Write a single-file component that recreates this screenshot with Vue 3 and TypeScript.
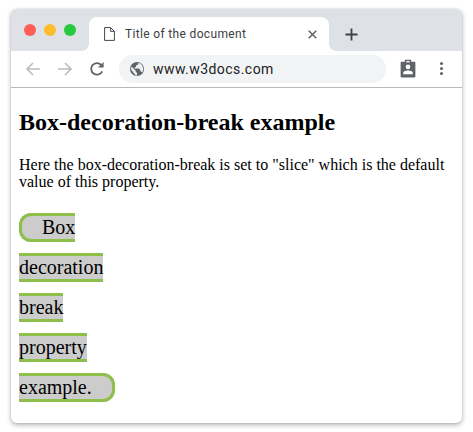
<script setup lang="ts">
const words: string[] = ['Box', 'decoration', 'break', 'property', 'example.']
</script>

<template>
  <div class="page">
    <div class="window">
      <div class="tabstrip">
        <div class="lights">
          <span class="light red"></span>
          <span class="light yellow"></span>
          <span class="light green"></span>
        </div>
        <div class="tab">
          <svg class="doc" width="11" height="14" viewBox="0 0 11 14" fill="none">
            <path d="M.6 .6H6.6L10.4 4.4V13.4H.6Z M6.6 .6V4.4H10.4" stroke="#45484c" stroke-width="1" />
          </svg>
          <span class="tab-title">Title of the document</span>
          <svg class="close" width="9" height="9" viewBox="0 0 9 9" fill="none">
            <path d="M.7 .7L8.3 8.3M8.3 .7L.7 8.3" stroke="#5f6368" stroke-width="1.5" />
          </svg>
        </div>
        <svg class="plus" width="13" height="13" viewBox="0 0 13 13" fill="none">
          <path d="M6.5 .5V12.5M.5 6.5H12.5" stroke="#3c4043" stroke-width="1.8" />
        </svg>
      </div>
      <div class="toolbar">
        <svg class="nav nav-back" width="16" height="14" viewBox="0 0 16 14" fill="none">
          <path d="M15 7H2M8 1L2 7L8 13" stroke="#b9bcc0" stroke-width="1.6" />
        </svg>
        <svg class="nav nav-forward" width="16" height="14" viewBox="0 0 16 14" fill="none">
          <path d="M1 7H14M8 1L14 7L8 13" stroke="#b9bcc0" stroke-width="1.6" />
        </svg>
        <svg class="nav reload" width="16" height="16" viewBox="0 0 16 16" fill="none">
          <path d="M13.2 10.4A5.8 5.8 0 1 1 12.2 3.9" stroke="#5f6368" stroke-width="1.8" />
          <path d="M14.6 .9V6.6H8.9Z" fill="#5f6368" />
        </svg>
        <div class="omnibox">
          <svg class="globe" width="14" height="14" viewBox="0 0 14 14">
            <circle cx="7" cy="7" r="7" fill="#5f6368" />
            <path d="M1.5 4.6L5.6 8.4V9.6L7 11V13.4L5.6 13.2L1 7.5Z M8 .9L8.2 2.4L6 3.5V5H4.8V6.4H8.8L10.4 8V9.4H11.2L12.5 10.4L13.3 7L12.3 3.5L10.4 1.6Z" fill="#eef0f2" />
          </svg>
          <span class="url">www.w3docs.com</span>
        </div>
        <svg class="clipboard" width="16" height="19" viewBox="0 0 15 18">
          <path d="M1.5 2.5H4.5V.8H10.5V2.5H13.5A1 1 0 0 1 14.5 3.5V16.5A1 1 0 0 1 13.5 17.5H1.5A1 1 0 0 1 .5 16.5V3.5A1 1 0 0 1 1.5 2.5Z" fill="#5f6368" />
          <rect x="6" y="1.8" width="3" height="1.5" fill="#f4f4f5" />
          <circle cx="7.5" cy="7.5" r="2.2" fill="#fff" />
          <path d="M3 14.5V13C3 11.4 5.5 10.8 7.5 10.8S12 11.4 12 13V14.5Z" fill="#fff" />
        </svg>
        <div class="dots">
          <span class="dot"></span>
          <span class="dot"></span>
          <span class="dot"></span>
        </div>
      </div>
      <main class="content">
        <h1 class="heading">Box-decoration-break example</h1>
        <p class="intro">Here the box-decoration-break is set to "slice" which is the default value of this property.</p>
        <div class="demo">
          <span class="slice"><template v-for="(word, i) in words" :key="word">{{ word }}<br v-if="i < words.length - 1" /></template></span>
        </div>
      </main>
    </div>
  </div>
</template>

<style>
html,
body {
  margin: 0;
  background: #fff;
}
</style>

<style scoped>
.page {
  width: 473px;
  height: 432px;
  padding: 9px 11px;
  box-sizing: border-box;
  background: #fff;
  overflow: hidden;
}
.window {
  width: 451px;
  height: 414px;
  display: flex;
  flex-direction: column;
  background: #fff;
  border-radius: 6px;
  overflow: hidden;
  box-shadow: 0 2px 5px rgba(0, 0, 0, 0.3), 0 0 2px rgba(0, 0, 0, 0.12);
}
.tabstrip {
  height: 42px;
  flex: none;
  display: flex;
  align-items: flex-end;
  background: #dee1e6;
}
.lights {
  display: flex;
  gap: 8px;
  align-self: flex-start;
  margin: 15px 0 0 13px;
}
.light {
  width: 12px;
  height: 12px;
  border-radius: 50%;
}
.red {
  background: #ff5f57;
}
.yellow {
  background: #febc2e;
}
.green {
  background: #28c840;
}
.tab {
  position: relative;
  width: 240px;
  height: 34px;
  margin-left: 13px;
  padding: 0 12px 0 15px;
  box-sizing: border-box;
  display: flex;
  align-items: center;
  background: #fff;
  border-radius: 8px 8px 0 0;
}
.tab::before,
.tab::after {
  content: "";
  position: absolute;
  bottom: 0;
  width: 7px;
  height: 7px;
}
.tab::before {
  left: -7px;
  background: radial-gradient(circle at 0 0, #dee1e6 6.5px, #fff 7px);
}
.tab::after {
  right: -7px;
  background: radial-gradient(circle at 100% 0, #dee1e6 6.5px, #fff 7px);
}
.doc {
  flex: none;
}
.tab-title {
  margin-left: 10px;
  flex: 1;
  font: 12px "Roboto", "Liberation Sans", sans-serif;
  letter-spacing: 0.34px;
  color: #3c4043;
  white-space: nowrap;
}
.close {
  flex: none;
}
.plus {
  align-self: flex-start;
  margin: 19px 0 0 16px;
}
.toolbar {
  height: 37px;
  flex: none;
  box-sizing: border-box;
  display: flex;
  align-items: center;
  background: #fff;
  border-bottom: 1px solid #b8b9ba;
  padding: 0 0 1px 14px;
}
.nav {
  flex: none;
}
.nav-forward {
  margin-left: 16px;
}
.reload {
  margin-left: 16px;
}
.omnibox {
  width: 267px;
  height: 28px;
  margin-left: 14px;
  padding-left: 11px;
  box-sizing: border-box;
  display: flex;
  align-items: center;
  background: #f1f3f4;
  border-radius: 14px;
}
.url {
  margin-left: 9px;
  font: 14px "Roboto", "Liberation Sans", sans-serif;
  letter-spacing: 0.45px;
  color: #202124;
}
.clipboard {
  flex: none;
  margin-left: 14px;
}
.dots {
  display: flex;
  flex-direction: column;
  gap: 2px;
  margin-left: 24px;
}
.dot {
  width: 3px;
  height: 3px;
  border-radius: 50%;
  background: #5f6368;
}
.content {
  padding: 0 8px;
  font-family: "Liberation Serif", "Times New Roman", serif;
  color: #000;
}
.heading {
  margin: 20px 0 0;
  font-size: 24px;
  line-height: 28px;
  font-weight: 700;
}
.intro {
  margin: 20px 0 0;
  font-size: 16px;
  line-height: 17px;
}
.demo {
  margin-top: 17px;
  font-size: 20px;
  line-height: 40px;
}
.slice {
  padding: 0 20px 1px;
  margin: 0;
  background: #ccc;
  border: 3px solid #8ebf4a;
  border-radius: 12px;
  box-decoration-break: slice;
  -webkit-box-decoration-break: slice;
}
</style>
